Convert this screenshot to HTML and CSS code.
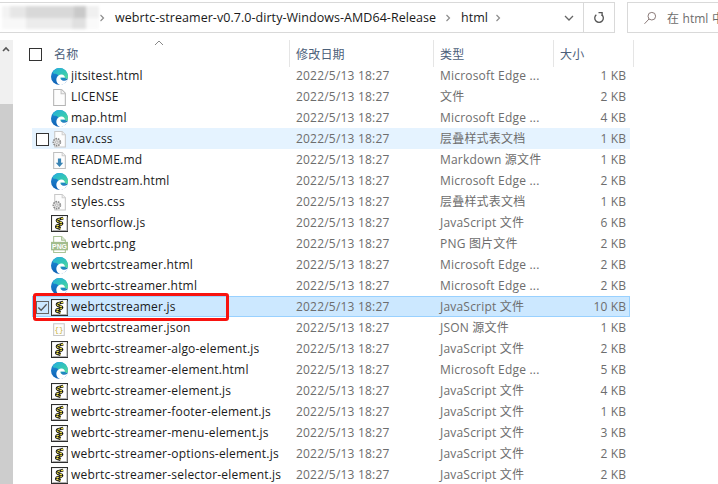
FILE: index.html
```html
<!DOCTYPE html>
<html lang="zh">
<head>
<meta charset="utf-8">
<title>html</title>
<link rel="stylesheet" href="styles.css">
</head>
<body>
<svg class="sprite" aria-hidden="true">
  <defs>
    <linearGradient id="edgeBase" x1="0" y1="0" x2="0" y2="1"><stop offset="0" stop-color="#1f8fd8"/><stop offset="1" stop-color="#0f60b4"/></linearGradient>
    <linearGradient id="edgeTop" x1="0" y1="0" x2="1" y2="1"><stop offset="0" stop-color="#25aede"/><stop offset=".6" stop-color="#35c8b4"/><stop offset="1" stop-color="#62dc98"/></linearGradient>
    <symbol id="i-edge" viewBox="0 0 16 16">
      <circle cx="8" cy="8" r="8" fill="url(#edgeBase)"/>
      <path d="M1.500 4C3 1.500 5.500 0 8 0c4.500 0 8 3.500 8 8 0 1.200-.6 2.400-2 2.700L8 10.500C8 7.500 6 5.500 4 5.500c-1 0-2 .2-2.500-1.500z" fill="url(#edgeTop)"/>
      <path d="M8.500 16C5.500 15 4.500 12 5.300 9.500 6.100 7.200 8.300 6 10 6.200c1.800.2 3 1.300 3.200 2.900H8.800c-.1 2.300 2.900 3.900 6.700 1.900-1 2.500-3.800 5-7 5z" fill="#fff"/>
      <path d="M9 9.200h4.300c.9.100.9 1.300-.3 1.400-1.500.2-3.500-.1-4-1.400z" fill="#1a86c8"/>
    </symbol>
    <symbol id="i-doc" viewBox="0 0 16 16">
      <path d="M2.500.5h7.500l3.500 3.500v11.500h-11z" fill="#fdfdfd" stroke="#b5b5b5"/>
      <path d="M9.500.5v4h4" fill="#f2f2f2" stroke="#c4c4c4"/>
    </symbol>
    <symbol id="i-css" viewBox="0 0 16 16">
      <path d="M3.500.5h7l3 3v11.500h-10z" fill="#fdfdfd" stroke="#c8c8c8"/>
      <path d="M10.500.5v3h3" fill="#f2f2f2" stroke="#d0d0d0"/>
      <circle cx="5.500" cy="10.500" r="3.300" fill="#e4e4e4" stroke="#8a8a8a" stroke-width="1.600" stroke-dasharray="1.500 .8"/>
      <circle cx="5.500" cy="10.500" r="1.200" fill="#fff" stroke="#909090" stroke-width=".6"/>
    </symbol>
    <symbol id="i-md" viewBox="0 0 16 16">
      <path d="M2.500.5h8l3 3v12h-11z" fill="#fdfdfd" stroke="#c0c0c0"/>
      <path d="M10.500.5v3h3" fill="#f2f2f2" stroke="#ccc"/>
      <path d="M6.500 6h3v4h2L8 14l-3.500-4h2z" fill="#3a84b4"/>
    </symbol>
    <symbol id="i-js" viewBox="0 0 16 16">
      <rect x=".5" y=".5" width="15" height="15" fill="#fff" stroke="#2e2e2e"/>
      <path d="M1.500 14.500h13.500V2" fill="none" stroke="#b0b0b0"/>
      <path d="M11.500 3L6.500 4.200Q5 5.200 6.500 6.200L10 7.400Q10.900 8.500 9 9.200L5.500 10.200Q4.500 11.500 6 11.800L9 12.800" fill="none" stroke="#151515" stroke-width="2.700"/>
      <path d="M11.500 3L6.500 4.200Q5 5.200 6.500 6.200L10 7.400Q10.900 8.500 9 9.200L5.500 10.200Q4.500 11.500 6 11.800L9 12.800" fill="none" stroke="#f5e84e" stroke-width="1.100" stroke-dasharray="2.200 .9"/>
    </symbol>
    <symbol id="i-png" viewBox="0 0 16 16">
      <path d="M2.500.5h7.500l3.500 3.500v11.500h-11z" fill="#fff" stroke="#a9c295"/>
      <path d="M10 .5v3.500h3.500" fill="#dfe9d6" stroke="#a9c295"/>
      <rect x="0" y="5.500" width="16" height="8" fill="#a3bd8d"/>
      <text x="8" y="12" class="png-label">PNG</text>
    </symbol>
    <symbol id="i-json" viewBox="0 0 16 16">
      <path d="M2.500 3.500h10v11h-10z" fill="#fdfdfd" stroke="#c8c8c8"/>
      <text x="7.500" y="11.500" class="json-label">{}</text>
    </symbol>
  </defs>
</svg>

<header class="toolbar">
  <div class="address">
    <div class="blurred"></div>
    <svg class="chev" viewBox="0 0 6 8"><path d="M1.500 1l3 3-3 3" /></svg>
    <span class="crumb crumb-long">webrtc-streamer-v0.7.0-dirty-Windows-AMD64-Release</span>
    <svg class="chev" viewBox="0 0 6 8"><path d="M1.500 1l3 3-3 3" /></svg>
    <span class="crumb crumb-html">html</span>
    <svg class="chev" viewBox="0 0 6 8"><path d="M1.500 1l3 3-3 3" /></svg>
    <svg class="drop" viewBox="0 0 10 6"><path d="M1 1l4 4 4-4" /></svg>
    <button class="refresh" aria-label="刷新">
      <svg viewBox="0 0 12 12"><path d="M8.800 2.700A4.300 4.300 0 1 1 3.300 2.700" /><path d="M5.500 .6h3.600v3.300" /></svg>
    </button>
  </div>
  <div class="search">
    <svg class="lens" viewBox="0 0 14 14"><circle cx="8.800" cy="5.200" r="3.800"/><path d="M6 8L1.500 12.800"/></svg>
    <span class="search-text">在 html 中</span>
  </div>
</header>

<main class="main">
  <div class="scrollbar">
    <svg class="scroll-up" viewBox="0 0 8 6"><path d="M1 5l3-3 3 3"/></svg>
    <div class="scroll-thumb"></div>
  </div>
  <section class="list">
    <div class="head">
      <div class="col col-name"><span class="box"></span>名称<svg class="sort" viewBox="0 0 10 6"><path d="M1 5l4-4 4 4"/></svg></div>
      <div class="col">修改日期</div>
      <div class="col">类型</div>
      <div class="col">大小</div>
    </div>

    <div class="row"><div class="lead"><svg class="icon"><use href="#i-edge"/></svg></div><div class="name">jitsitest.html</div><div class="meta">2022/5/13 18:27</div><div class="meta">Microsoft Edge ...</div><div class="meta size">1 KB</div></div>
    <div class="row"><div class="lead"><svg class="icon"><use href="#i-doc"/></svg></div><div class="name">LICENSE</div><div class="meta">2022/5/13 18:27</div><div class="meta">文件</div><div class="meta size">2 KB</div></div>
    <div class="row"><div class="lead"><svg class="icon"><use href="#i-edge"/></svg></div><div class="name">map.html</div><div class="meta">2022/5/13 18:27</div><div class="meta">Microsoft Edge ...</div><div class="meta size">4 KB</div></div>
    <div class="row row-hover"><div class="lead"><span class="box"></span><svg class="icon"><use href="#i-css"/></svg></div><div class="name">nav.css</div><div class="meta">2022/5/13 18:27</div><div class="meta">层叠样式表文档</div><div class="meta size">1 KB</div></div>
    <div class="row"><div class="lead"><svg class="icon"><use href="#i-md"/></svg></div><div class="name">README.md</div><div class="meta">2022/5/13 18:27</div><div class="meta">Markdown 源文件</div><div class="meta size">1 KB</div></div>
    <div class="row"><div class="lead"><svg class="icon"><use href="#i-edge"/></svg></div><div class="name">sendstream.html</div><div class="meta">2022/5/13 18:27</div><div class="meta">Microsoft Edge ...</div><div class="meta size">2 KB</div></div>
    <div class="row"><div class="lead"><svg class="icon"><use href="#i-css"/></svg></div><div class="name">styles.css</div><div class="meta">2022/5/13 18:27</div><div class="meta">层叠样式表文档</div><div class="meta size">1 KB</div></div>
    <div class="row"><div class="lead"><svg class="icon"><use href="#i-js"/></svg></div><div class="name">tensorflow.js</div><div class="meta">2022/5/13 18:27</div><div class="meta">JavaScript 文件</div><div class="meta size">6 KB</div></div>
    <div class="row"><div class="lead"><svg class="icon"><use href="#i-png"/></svg></div><div class="name">webrtc.png</div><div class="meta">2022/5/13 18:27</div><div class="meta">PNG 图片文件</div><div class="meta size">2 KB</div></div>
    <div class="row"><div class="lead"><svg class="icon"><use href="#i-edge"/></svg></div><div class="name">webrtcstreamer.html</div><div class="meta">2022/5/13 18:27</div><div class="meta">Microsoft Edge ...</div><div class="meta size">2 KB</div></div>
    <div class="row"><div class="lead"><svg class="icon"><use href="#i-edge"/></svg></div><div class="name">webrtc-streamer.html</div><div class="meta">2022/5/13 18:27</div><div class="meta">Microsoft Edge ...</div><div class="meta size">2 KB</div></div>
    <div class="row row-selected">
      <div class="lead"><span class="box box-checked"><svg viewBox="0 0 12 12"><path d="M1.500 6l3 3 6-6.500"/></svg></span><svg class="icon"><use href="#i-js"/></svg></div><div class="name">webrtcstreamer.js</div><div class="meta">2022/5/13 18:27</div><div class="meta">JavaScript 文件</div><div class="meta size">10 KB</div>
      <div class="annotation"></div>
    </div>
    <div class="row"><div class="lead"><svg class="icon"><use href="#i-json"/></svg></div><div class="name">webrtcstreamer.json</div><div class="meta">2022/5/13 18:27</div><div class="meta">JSON 源文件</div><div class="meta size">1 KB</div></div>
    <div class="row"><div class="lead"><svg class="icon"><use href="#i-js"/></svg></div><div class="name">webrtc-streamer-algo-element.js</div><div class="meta">2022/5/13 18:27</div><div class="meta">JavaScript 文件</div><div class="meta size">2 KB</div></div>
    <div class="row"><div class="lead"><svg class="icon"><use href="#i-edge"/></svg></div><div class="name">webrtc-streamer-element.html</div><div class="meta">2022/5/13 18:27</div><div class="meta">Microsoft Edge ...</div><div class="meta size">5 KB</div></div>
    <div class="row"><div class="lead"><svg class="icon"><use href="#i-js"/></svg></div><div class="name">webrtc-streamer-element.js</div><div class="meta">2022/5/13 18:27</div><div class="meta">JavaScript 文件</div><div class="meta size">4 KB</div></div>
    <div class="row"><div class="lead"><svg class="icon"><use href="#i-js"/></svg></div><div class="name">webrtc-streamer-footer-element.js</div><div class="meta">2022/5/13 18:27</div><div class="meta">JavaScript 文件</div><div class="meta size">1 KB</div></div>
    <div class="row"><div class="lead"><svg class="icon"><use href="#i-js"/></svg></div><div class="name">webrtc-streamer-menu-element.js</div><div class="meta">2022/5/13 18:27</div><div class="meta">JavaScript 文件</div><div class="meta size">3 KB</div></div>
    <div class="row"><div class="lead"><svg class="icon"><use href="#i-js"/></svg></div><div class="name">webrtc-streamer-options-element.js</div><div class="meta">2022/5/13 18:27</div><div class="meta">JavaScript 文件</div><div class="meta size">2 KB</div></div>
    <div class="row"><div class="lead"><svg class="icon"><use href="#i-js"/></svg></div><div class="name">webrtc-streamer-selector-element.js</div><div class="meta">2022/5/13 18:27</div><div class="meta">JavaScript 文件</div><div class="meta size">2 KB</div></div>
  </section>
</main>
</body>
</html>
```

FILE: styles.css
```css
* { box-sizing: border-box; }

html, body {
  margin: 0;
  height: 484px;
  overflow: hidden;
  background: #fff;
}

body {
  width: 718px;
  font-family: "Open Sans", "Noto Sans CJK SC", sans-serif;
  font-size: 12px;
  letter-spacing: .2px;
  color: #1a1a1a;
}

.sprite {
  display: block;
  width: 0;
  height: 0;
}

.png-label {
  font-family: "Liberation Sans", sans-serif;
  font-size: 6.500px;
  font-weight: 700;
  letter-spacing: 0;
  fill: #fff;
  text-anchor: middle;
}

.json-label {
  font-family: "Liberation Mono", monospace;
  font-size: 7px;
  letter-spacing: 0;
  fill: #c9b23a;
  text-anchor: middle;
}

/* Top bar */
.toolbar {
  display: flex;
  height: 40px;
  padding-top: 2px;
  padding-bottom: 7px;
  gap: 12px;
}

.address {
  display: flex;
  flex: none;
  align-items: center;
  width: 615px;
  border: 1px solid #d9d9d9;
  border-left: 0;
}

.blurred {
  flex: none;
  width: 97px;
  height: 23px;
  margin-left: 2px;
  filter: blur(1.500px);
  background:
    linear-gradient(90deg, #f3f3f3 0 8px, #e6e6e6 8px 24px, #d8d8d8 24px 72px, #c9c9c9 72px 84px, #f0f0f0 84px 97px) top / 100% 12px no-repeat,
    linear-gradient(90deg, #f8f8f8 0 24px, #ececec 24px 70px, #e0e0e0 70px 84px, #fafafa 84px 97px) bottom / 100% 11px no-repeat;
}

.chev {
  flex: none;
  width: 6px;
  height: 8px;
  fill: none;
  stroke: #8c8c8c;
  stroke-width: 1.200;
}

.crumb {
  flex: none;
  font-size: 12.500px;
  letter-spacing: .05px;
  white-space: nowrap;
  padding-bottom: 1px;
}

.crumb-long {
  width: 322px;
  margin: 0 8px 0 10px;
}

.crumb-html {
  width: 26px;
  margin: 0 8px 0 10px;
}

.drop {
  flex: none;
  width: 10px;
  height: 6px;
  margin-left: 63px;
  fill: none;
  stroke: #666;
  stroke-width: 1.300;
}

.refresh {
  flex: none;
  width: 31px;
  height: 100%;
  margin-left: 9px;
  padding: 0;
  border: 0;
  border-left: 1px solid #d9d9d9;
  background: #fff;
}

.refresh svg {
  display: block;
  width: 12px;
  height: 12px;
  margin: 0 auto;
  fill: none;
  stroke: #555;
  stroke-width: 1.300;
}

.search {
  display: flex;
  align-items: center;
  flex: 1;
  min-width: 0;
  overflow: hidden;
  border: 1px solid #d9d9d9;
  border-right: 0;
  padding-left: 15px;
  white-space: nowrap;
}

.lens {
  flex: none;
  width: 14px;
  height: 14px;
  fill: none;
  stroke: #8a7a78;
  stroke-width: 1;
}

.search-text {
  flex: none;
  margin-left: 10px;
  color: #6d6d6d;
  font-size: 12px;
  letter-spacing: 0;
  word-spacing: .5px;
}

/* Main area */
.main {
  display: flex;
  height: 444px;
}

.scrollbar {
  flex: none;
  display: flex;
  flex-direction: column;
  width: 13px;
  background: #f0f0f0;
}

.scroll-up {
  width: 8px;
  height: 6px;
  margin: 6px 0 0 2px;
  fill: none;
  stroke: #555;
  stroke-width: 1.600;
}

.scroll-thumb {
  flex: 1;
  margin-top: 52px;
  background: #cdcdcd;
}

.list {
  flex: none;
  width: 640px;
  padding-left: 19px;
}

/* Column header */
.head {
  position: relative;
  display: grid;
  grid-template-columns: 258px 144px 120px 80px;
  height: 25px;
  color: #4c607a;
}

.col {
  display: flex;
  align-items: center;
  height: 27px;
  padding: 1px 0 0 6px;
  border-right: 1px solid #e5e5e5;
}

.col-name {
  padding-left: 0;
}

.col-name .box {
  margin: 1px 12px 0 -3px;
}

.sort {
  position: absolute;
  left: 122px;
  top: 0;
  width: 10px;
  height: 6px;
  fill: none;
  stroke: #888;
  stroke-width: 1;
}

/* File rows */
.row {
  position: relative;
  display: grid;
  grid-template-columns: 39px 225px 144px 120px 70px;
  width: 598px;
  height: 21px;
  line-height: 22px;
}

.row-hover { background: #e5f3ff; }

.row-selected {
  background: #cce8ff;
  box-shadow: inset 0 0 0 1px #99d1ff;
}

.lead {
  display: flex;
  align-items: center;
  justify-content: flex-end;
  gap: 2px;
  padding-right: 3px;
}

.icon {
  display: block;
  flex: none;
  width: 17px;
  height: 17px;
}

.box {
  display: block;
  flex: none;
  width: 13px;
  height: 13px;
  border: 1px solid #333;
  background: #fff;
}

.box-checked {
  border-color: #666;
  background: transparent;
}

.box-checked svg {
  display: block;
  width: 11px;
  height: 11px;
  fill: none;
  stroke: #555;
  stroke-width: 1.400;
}

.name {
  white-space: nowrap;
  overflow: hidden;
}

.meta {
  color: #6d6d6d;
  white-space: nowrap;
}

.size {
  text-align: right;
  padding-right: 4px;
  letter-spacing: .1px;
}

.annotation {
  position: absolute;
  left: 1px;
  top: -3px;
  width: 196px;
  height: 28px;
  border: 3px solid #f8130f;
  border-radius: 3px;
}
```
